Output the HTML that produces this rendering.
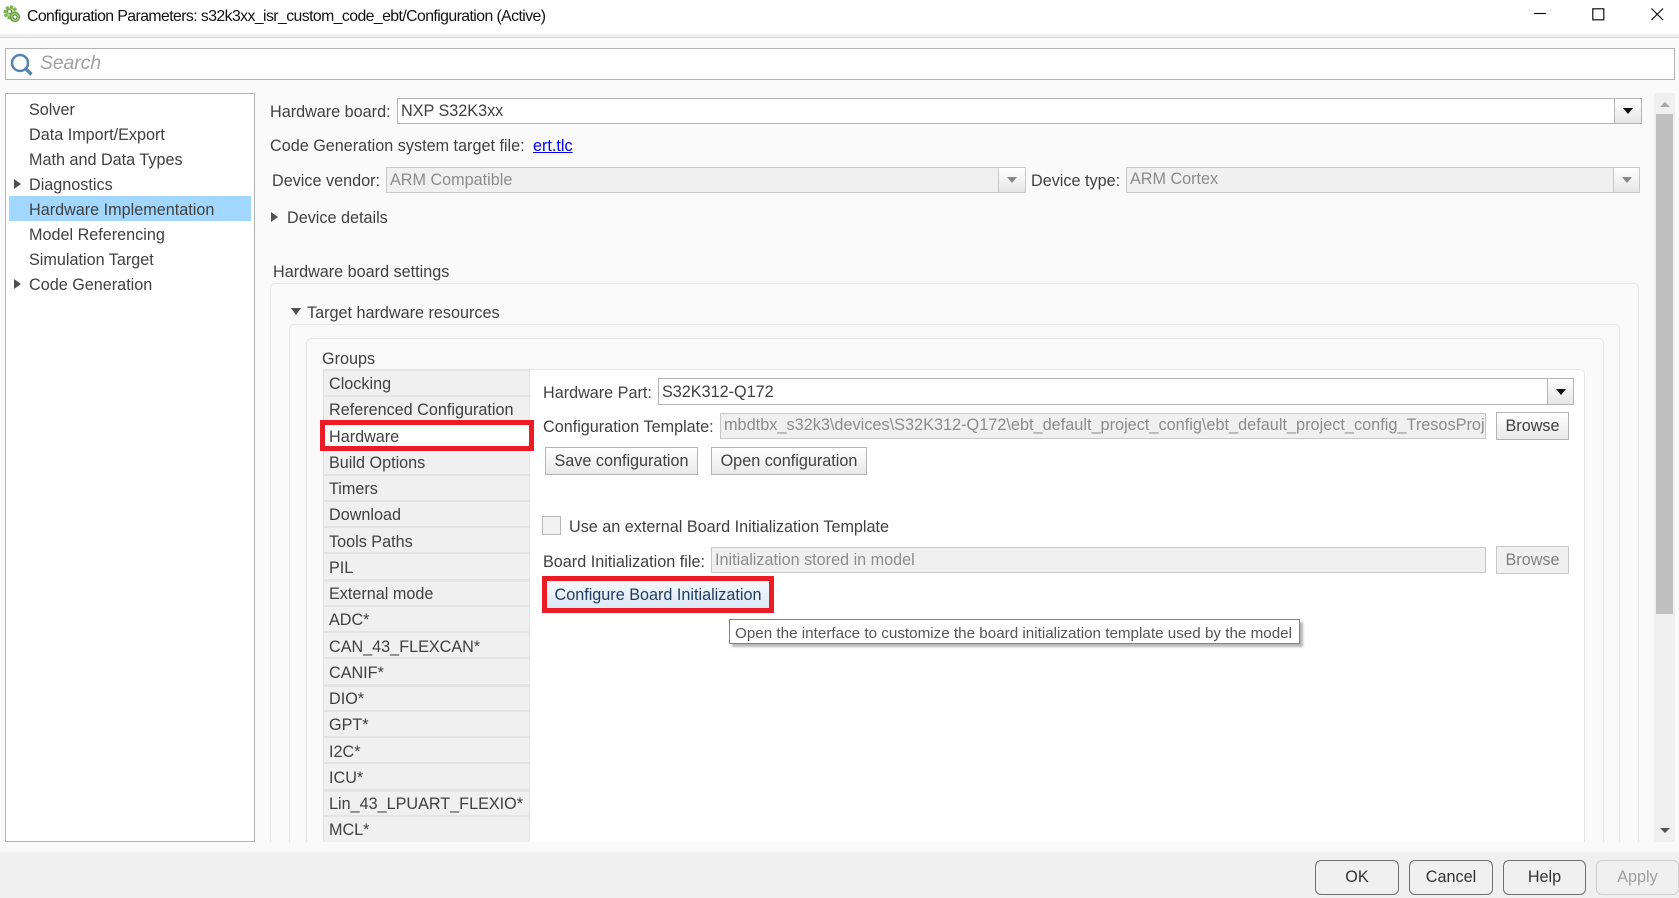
<!DOCTYPE html>
<html><head><meta charset="utf-8"><title>Configuration Parameters</title>
<style>
html,body{margin:0;padding:0;width:1679px;height:898px;overflow:hidden;background:#fafafa}
body{position:relative;font-family:"Liberation Sans",Arial,sans-serif;font-size:16.2px;color:#404040}
.b,.t{position:absolute;box-sizing:border-box}
.t{white-space:nowrap;line-height:20px;height:20px;margin-top:1px}
.in{position:absolute;box-sizing:border-box;background:#fff;border:1.5px solid #b4b4b4}
.dis{background:#f0f0f0;border-color:#c8c8c8}
.dd{position:absolute;box-sizing:border-box;border:1.5px solid #b4b4b4;background:linear-gradient(#fff,#e6e6e6)}
.dd i{position:absolute;left:50%;top:50%;margin:-3px 0 0 -5px;border:5px solid transparent;border-top:6px solid #111;border-bottom:0}
.dd.off{border-color:#c8c8c8}.dd.off i{border-top-color:#888}
.btn{position:absolute;box-sizing:border-box;border:1.5px solid #b4b4b4;background:linear-gradient(#fff,#e9e9e9);text-align:center;line-height:27px;color:#404040}
.f{position:absolute;box-sizing:border-box;top:860px;height:35px;border:1px solid #707070;border-radius:6px;text-align:center;line-height:33px;font-size:16.2px;color:#333;background:#f0f0f0}
.p{position:absolute;box-sizing:border-box;border:1px solid #e6e6e6;border-bottom:0;border-radius:5px 5px 0 0;background:#fafafa}
.tree{position:absolute;left:27px}
.tab{position:absolute;left:329px;white-space:nowrap;line-height:20px;height:20px;margin-top:1px}
.sep{position:absolute;left:323px;width:207px;height:2px;background:#e4e4e4}
.tri{position:absolute;width:0;height:0;border-style:solid;border-color:transparent}
.r{border-left-color:#505050;border-width:5.5px 0 5.5px 7.5px}
.g{color:#8c8c8c}
</style></head><body>

<!-- title bar -->
<div class="b" style="left:0;top:0;width:1679px;height:34px;background:#fff"></div>
<div class="b" style="left:0;top:34px;width:1679px;height:4px;background:#efefef;border-bottom:1px solid #d8d8d8"></div>
<svg class="b" style="left:3px;top:5px" width="18" height="18" viewBox="0 0 18 18">
<circle cx="7.5" cy="7.5" r="5.5" fill="#a9cf85" stroke="#7fb457" stroke-width="3.2" stroke-dasharray="3 1.2"/>
<circle cx="12" cy="12" r="4.6" fill="#9ac96f" stroke="#5f9a45" stroke-width="1"/>
<circle cx="12" cy="12" r="2" fill="#fff" stroke="#5f7f45" stroke-width="1"/>
<circle cx="6.5" cy="6.5" r="2" fill="#fff" stroke="#6a8f4a" stroke-width="1"/>
</svg>
<svg class="b" style="left:27px;top:4px" width="530" height="26"><text x="0" y="17" font-family="Liberation Sans" font-size="15.8" fill="#111" textLength="519" lengthAdjust="spacing">Configuration Parameters: s32k3xx_isr_custom_code_ebt/Configuration (Active)</text></svg>
<svg class="b" style="left:1530px;top:4px" width="140" height="20" fill="none" stroke="#111" stroke-width="1.2">
<path d="M4 9.5H16"/><rect x="62.8" y="4.8" width="11" height="11"/><path d="M121.5 4.5L133 16M133 4.5L121.5 16"/></svg>

<!-- search -->
<div class="in" style="left:5px;top:48px;width:1670px;height:32px"></div>
<svg class="b" style="left:9px;top:52px" width="26" height="26" fill="none" stroke="#5584ae">
<circle cx="11" cy="11" r="8" stroke-width="2.5"/><path d="M16.5 16.5L22.5 22.5" stroke-width="3.4"/></svg>
<div class="t" style="left:40px;top:53px;font-size:19.3px;font-style:italic;color:#a0a0a0">Search</div>

<!-- tree -->
<div class="b" style="left:5px;top:93px;width:250px;height:749px;background:#fff;border:1.5px solid #b4b4b4;border-bottom:1px solid #b4b4b4"></div>
<div class="b" style="left:9px;top:196px;width:242px;height:25px;background:#a2d8ff"></div>
<div class="t tree" style="left:29px;top:99px">Solver</div>
<div class="t tree" style="left:29px;top:124px">Data Import/Export</div>
<div class="t tree" style="left:29px;top:149px">Math and Data Types</div>
<div class="t tree" style="left:29px;top:174px">Diagnostics</div>
<div class="t tree" style="left:29px;top:199px">Hardware Implementation</div>
<div class="t tree" style="left:29px;top:224px">Model Referencing</div>
<div class="t tree" style="left:29px;top:249px">Simulation Target</div>
<div class="t tree" style="left:29px;top:274px">Code Generation</div>
<div class="tri r" style="left:14px;top:179px"></div>
<div class="tri r" style="left:14px;top:279px"></div>

<!-- top settings -->
<div class="t" style="left:270px;top:101px">Hardware board:</div>
<div class="in" style="left:397px;top:98px;width:1218px;height:26px"></div>
<div class="t" style="left:401px;top:100px">NXP S32K3xx</div>
<div class="dd" style="left:1614px;top:98px;width:28px;height:26px"><i></i></div>
<div class="t" style="left:270px;top:135px">Code Generation system target file:</div>
<div class="t" style="left:533px;top:135px;color:#0000ee;text-decoration:underline">ert.tlc</div>
<div class="t" style="left:272px;top:170px">Device vendor:</div>
<div class="in dis" style="left:386px;top:167px;width:613px;height:26px"></div>
<div class="t g" style="left:390px;top:169px">ARM Compatible</div>
<div class="dd off" style="left:998px;top:167px;width:28px;height:26px"><i></i></div>
<div class="t" style="left:1031px;top:170px">Device type:</div>
<div class="in dis" style="left:1126px;top:167px;width:488px;height:26px"></div>
<div class="t g" style="left:1130px;top:168px">ARM Cortex</div>
<div class="dd off" style="left:1613px;top:167px;width:27px;height:26px"><i></i></div>
<div class="tri r" style="left:271px;top:212px"></div>
<div class="t" style="left:287px;top:207px">Device details</div>
<div class="t" style="left:273px;top:261px">Hardware board settings</div>

<!-- nested panels -->
<div class="p" style="left:270px;top:283px;width:1369px;height:559px"></div>
<div class="tri" style="left:291px;top:308px;border-width:7px 5px 0 5px;border-top-color:#505050"></div>
<div class="t" style="left:307px;top:302px">Target hardware resources</div>
<div class="p" style="left:289px;top:324px;width:1331px;height:518px"></div>
<div class="p" style="left:306px;top:338px;width:1298px;height:504px"></div>
<div class="t" style="left:322px;top:348px">Groups</div>
<div class="b" style="left:530px;top:369px;width:1055px;height:473px;background:#fff;border-top:1px solid #e6e6e6;border-right:1px solid #e6e6e6;border-radius:0 5px 0 0"></div>

<!-- tabs -->
<div class="b" style="left:323px;top:369px;width:207px;height:473px;background:#f0f0f0;border-left:1px solid #e0e0e0;border-top:2px solid #e4e4e4;border-right:1px solid #e4e4e4"></div>
<div class="sep" style="top:395px"></div><div class="sep" style="top:421px"></div><div class="sep" style="top:474px"></div><div class="sep" style="top:500px"></div><div class="sep" style="top:526px"></div><div class="sep" style="top:552px"></div><div class="sep" style="top:579px;height:3px"></div><div class="sep" style="top:605px"></div><div class="sep" style="top:631px"></div><div class="sep" style="top:657px"></div><div class="sep" style="top:684px;height:3px"></div><div class="sep" style="top:710px"></div><div class="sep" style="top:736px"></div><div class="sep" style="top:762px"></div><div class="sep" style="top:789px;height:3px"></div><div class="sep" style="top:815px"></div>
<div class="b" style="left:320px;top:420px;width:214px;height:31px;background:#fff;border:5px solid #ed1c24"></div>
<div class="tab" style="top:373px">Clocking</div>
<div class="tab" style="top:399px">Referenced Configuration</div>
<div class="tab" style="top:426px">Hardware</div>
<div class="tab" style="top:452px">Build Options</div>
<div class="tab" style="top:478px">Timers</div>
<div class="tab" style="top:504px">Download</div>
<div class="tab" style="top:531px">Tools Paths</div>
<div class="tab" style="top:557px">PIL</div>
<div class="tab" style="top:583px">External mode</div>
<div class="tab" style="top:609px">ADC*</div>
<div class="tab" style="top:636px">CAN_43_FLEXCAN*</div>
<div class="tab" style="top:662px">CANIF*</div>
<div class="tab" style="top:688px">DIO*</div>
<div class="tab" style="top:714px">GPT*</div>
<div class="tab" style="top:741px">I2C*</div>
<div class="tab" style="top:767px">ICU*</div>
<div class="tab" style="top:793px">Lin_43_LPUART_FLEXIO*</div>
<div class="tab" style="top:819px">MCL*</div>

<!-- form -->
<div class="t" style="left:543px;top:382px">Hardware Part:</div>
<div class="in" style="left:658px;top:378px;width:890px;height:27px"></div>
<div class="t" style="left:662px;top:381px">S32K312-Q172</div>
<div class="dd" style="left:1547px;top:378px;width:27px;height:27px"><i></i></div>
<div class="t" style="left:543px;top:416px">Configuration Template:</div>
<div class="in dis" style="left:720px;top:413px;width:766px;height:26px;overflow:hidden"><div class="t g" style="left:3px;top:0px;font-size:16.3px">mbdtbx_s32k3\devices\S32K312-Q172\ebt_default_project_config\ebt_default_project_config_TresosProj</div></div>
<div class="btn" style="left:1496px;top:412px;width:73px;height:28px">Browse</div>
<div class="btn" style="left:545px;top:447px;width:153px;height:28px">Save configuration</div>
<div class="btn" style="left:711px;top:447px;width:156px;height:28px">Open configuration</div>
<div class="b" style="left:542px;top:516px;width:19px;height:19px;background:#f2f2f2;border:1.5px solid #b8b8b8"></div>
<div class="t" style="left:569px;top:516px">Use an external Board Initialization Template</div>
<div class="t" style="left:543px;top:551px">Board Initialization file:</div>
<div class="in dis" style="left:711px;top:547px;width:775px;height:26px"></div>
<div class="t g" style="left:715px;top:549px">Initialization stored in model</div>
<div class="btn" style="left:1496px;top:546px;width:73px;height:28px;background:#f0f0f0;border-color:#c8c8c8;color:#808080">Browse</div>
<div class="b" style="left:542px;top:576px;width:232px;height:37px;border:5px solid #ed1c24;background:linear-gradient(#f4f8fc,#dce8f5);text-align:center;line-height:29px;color:#1f3a5f;white-space:nowrap">Configure Board Initialization</div>

<!-- tooltip -->
<div class="b" style="left:729px;top:619px;width:571px;height:25px;background:#fff;border:1.5px solid #808080;box-shadow:3px 3px 2px #b8b8b8"></div>
<svg class="b" style="left:735px;top:621px" width="562" height="22"><text x="0" y="17" font-family="Liberation Sans" font-size="15.2" fill="#555" textLength="557" lengthAdjust="spacing">Open the interface to customize the board initialization template used by the model</text></svg>

<!-- scrollbar -->
<div class="b" style="left:1654px;top:93px;width:21px;height:749px;background:#f0f0f0"></div>
<div class="b" style="left:1656px;top:114px;width:17px;height:500px;background:#c0c0c0"></div>
<div class="tri" style="left:1660px;top:102px;border-width:0 5px 5px 5px;border-bottom-color:#a8a8a8"></div>
<div class="tri" style="left:1660px;top:828px;border-width:5px 5px 0 5px;border-top-color:#505050"></div>

<!-- footer -->
<div class="b" style="left:0;top:852px;width:1679px;height:46px;background:#f0f0f0"></div>
<div class="f" style="left:1315px;width:84px">OK</div>
<div class="f" style="left:1409px;width:84px">Cancel</div>
<div class="f" style="left:1503px;width:83px">Help</div>
<div class="f" style="left:1596px;width:83px;border-color:#d0d0d0;color:#a0a0a0">Apply</div>
</body></html>
